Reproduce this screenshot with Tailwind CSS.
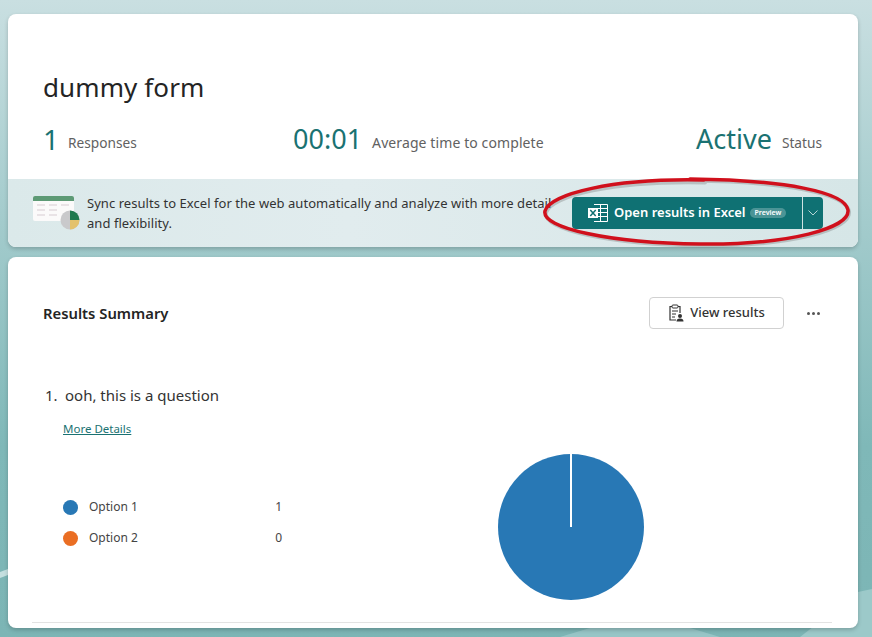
<!DOCTYPE html>
<html lang="en">
<head>
<meta charset="UTF-8">
<title>dummy form - Responses</title>
<script src="https://cdn.jsdelivr.net/npm/@tailwindcss/browser@4"></script>
</head>
<body class="relative h-[637px] w-[872px] overflow-hidden bg-[linear-gradient(180deg,#c9dfe1_0%,#a3cbcc_35%,#7fb8b8_70%,#7cb5b5_100%)] font-['Noto_Sans',sans-serif] text-[#242424]">
  <!-- background streaks -->
  <svg class="absolute inset-0" width="872" height="637" viewBox="0 0 872 637" fill="none">
    <path d="M0 572 L8 569 L8 575 L0 578Z" fill="#c4dfdf" />
    <path d="M858 592 L872 589 L872 637 L800 637Z" fill="#9cc9c9" />
    <path d="M560 637 L590 628 L690 628 L720 637Z" fill="#97c5c6" />
  </svg>

  <main class="relative flex flex-col gap-[10px] px-2 pt-[14px]">
    <!-- header card -->
    <section class="flex h-[233px] w-[850px] flex-col overflow-hidden rounded-lg bg-white shadow-[0_2px_4px_rgba(0,0,0,0.2)]">
      <div class="h-[165px] px-[35px] pt-[54px]">
        <h1 class="text-[26px] leading-[38px] font-normal tracking-[0.1px] text-[#242424]">dummy form</h1>
        <div class="mt-[15px] flex items-baseline justify-between pr-[1px]">
          <div class="flex items-baseline gap-[9px]">
            <span class="translate-y-px text-[28px] leading-[34px] text-[#1a7272]">1</span>
            <span class="-translate-y-px text-[13.7px] text-[#616161]">Responses</span>
          </div>
          <div class="ml-[4px] flex items-baseline gap-[10px]">
            <span class="text-[27px] leading-[34px] text-[#1a7272]">00:01</span>
            <span class="-translate-y-px text-sm tracking-[0.1px] text-[#616161]">Average time to complete</span>
          </div>
          <div class="flex items-baseline gap-[10px]">
            <span class="text-[27px] leading-[34px] text-[#1a7272]">Active</span>
            <span class="-translate-y-px text-[13.7px] text-[#616161]">Status</span>
          </div>
        </div>
      </div>
      <!-- excel banner -->
      <div class="flex flex-1 items-center bg-[linear-gradient(90deg,#dbe9ea,#e1ecee_40%,#d6e6e7)] pr-[35px] pl-[25px]">
        <svg class="mr-[7px] shrink-0" width="47" height="34" viewBox="0 0 47 34">
          <rect x="0" y="0" width="41" height="25" rx="2" fill="#fbfafa" />
          <path d="M0 5 V2 a2 2 0 0 1 2-2 H39 a2 2 0 0 1 2 2 V5Z" fill="#5d9a75" />
          <g fill="#e9e3e6">
            <rect x="4" y="8" width="8" height="2" /><rect x="16" y="8" width="8" height="2" /><rect x="28" y="8" width="8" height="2" />
            <rect x="4" y="13" width="8" height="2" /><rect x="16" y="13" width="8" height="2" />
            <rect x="4" y="18" width="8" height="2" /><rect x="16" y="18" width="8" height="2" />
          </g>
          <circle cx="37" cy="24" r="9.5" fill="#c9c9cb" />
          <path d="M37 24 V14.5 A9.5 9.5 0 0 1 46.5 24Z" fill="#1f7a4f" />
          <path d="M37 24 H46.5 A9.5 9.5 0 0 1 37 33.5Z" fill="#e3c26d" />
        </svg>
        <p class="w-[468px] shrink-0 text-[13px] leading-[20px] tracking-[0.05px] text-[#333]">Sync results to Excel for the web automatically and analyze with more detail and flexibility.</p>
        <div class="ml-[17px] flex h-8 w-[251px] shrink-0 overflow-hidden rounded-[4px] bg-[#0f7173] text-white">
          <div class="flex flex-1 items-center pl-[16px]">
            <svg class="mr-[6px] shrink-0" width="20" height="18" viewBox="0 0 20 18" fill="none">
              <path d="M6 .5 H19.5 V17.5 H6" stroke="#fff" />
              <path d="M6 4.5 H19.5 M9 8.5 H19.5 M9 12.5 H19.5 M12.5 .5 V17.5" stroke="#fff" />
              <rect x="0" y="4" width="10" height="10" fill="#fff" />
              <path d="M2.3 6 L7.7 12 M7.7 6 L2.3 12" stroke="#0f7173" stroke-width="1.5" />
            </svg>
            <span class="text-[13px] font-semibold whitespace-nowrap">Open results in Excel</span>
            <span class="ml-[4px] flex h-[10px] items-center rounded-full bg-white/25 px-[5px] text-[7px] font-semibold">Preview</span>
          </div>
          <div class="flex w-[21px] shrink-0 items-center justify-center border-l border-white/80">
            <svg width="12" height="8" viewBox="0 0 12 8" fill="none"><path d="M1.5 1.5 L6 6 L10.5 1.5" stroke="#b7d6d6" /></svg>
          </div>
        </div>
      </div>
    </section>

    <!-- results card -->
    <section class="h-[371px] w-[850px] rounded-lg bg-white shadow-[0_2px_4px_rgba(0,0,0,0.2)]">
      <div class="flex items-center justify-between pt-[40px] pr-[38px] pl-[35px]">
        <h2 class="text-[14.8px] font-semibold text-[#242424]">Results Summary</h2>
        <div class="flex items-center gap-[23px]">
          <button class="flex h-[32px] w-[135px] items-center justify-center gap-[6px] rounded-[4px] border border-[#d1d1d1] bg-white text-[13px] font-medium text-[#333]">
            <svg width="16" height="18" viewBox="0 0 16 18" fill="none">
              <path d="M4 2.5 H2 V16 H8 M10 2.5 H12 V9" stroke="#333" stroke-width="1.2" />
              <rect x="4" y="1" width="6" height="3" rx="1" stroke="#333" />
              <path d="M4 7 H10 M4 10 H8 M4 13 H7" stroke="#333" />
              <circle cx="12" cy="12" r="2" fill="#333" />
              <path d="M8.5 17.5 a3.5 3 0 0 1 7 0Z" fill="#333" />
            </svg>
            View results
          </button>
          <span class="flex items-center gap-[2px]">
            <i class="size-[3px] rounded-full bg-[#555]"></i><i class="size-[3px] rounded-full bg-[#555]"></i><i class="size-[3px] rounded-full bg-[#555]"></i>
          </span>
        </div>
      </div>

      <div class="mt-[55px] flex pl-[37px] text-[15px] leading-[22px] text-[#333]">
        <span class="w-[20px]">1.</span><span>ooh, this is a question</span>
      </div>
      <a class="mt-[15px] ml-[55px] block text-[11.5px] leading-[16px] text-[#1a7272] underline" href="#">More Details</a>

      <div class="flex">
        <ul class="mt-[60px] ml-[55px] flex w-[219px] flex-col gap-[11px] text-[12px] leading-[20px] text-[#444]">
          <li class="flex items-center"><i class="mr-[11px] size-[15px] rounded-full bg-[#2878b5]"></i><span class="flex-1">Option 1</span><span>1</span></li>
          <li class="flex items-center"><i class="mr-[11px] size-[15px] rounded-full bg-[#ea6e23]"></i><span class="flex-1">Option 2</span><span>0</span></li>
        </ul>
        <svg class="mt-[17px] ml-[216px]" width="146" height="146" viewBox="0 0 146 146">
          <circle cx="73" cy="73" r="73" fill="#2878b5" />
          <rect x="72" y="0" width="2" height="73" fill="#fff" />
        </svg>
      </div>
    </section>
  </main>

  <!-- divider at the bottom of results card -->
  <div class="absolute top-[622px] left-[32px] h-px w-[800px] bg-[#e3e3e3]"></div>

  <!-- red annotation ellipse -->
  <svg class="pointer-events-none absolute inset-0" width="872" height="637" viewBox="0 0 872 637" fill="none">
    <path d="M704 181 C612 179 550 194 545 211 C541 228 610 243 700 244 C790 245 850 228 848 210 C845 192 785 180 690 179" stroke="#666" stroke-opacity=".3" stroke-width="4" stroke-linecap="round" transform="translate(1 1.5)" />
    <path d="M704 180 C612 178 550 194 545 211 C541 228 610 243 700 244 C790 245 850 228 848 210 C845 192 785 180 690 179" stroke="#d0101c" stroke-width="3.5" stroke-linecap="round" />
  </svg>
</body>
</html>
